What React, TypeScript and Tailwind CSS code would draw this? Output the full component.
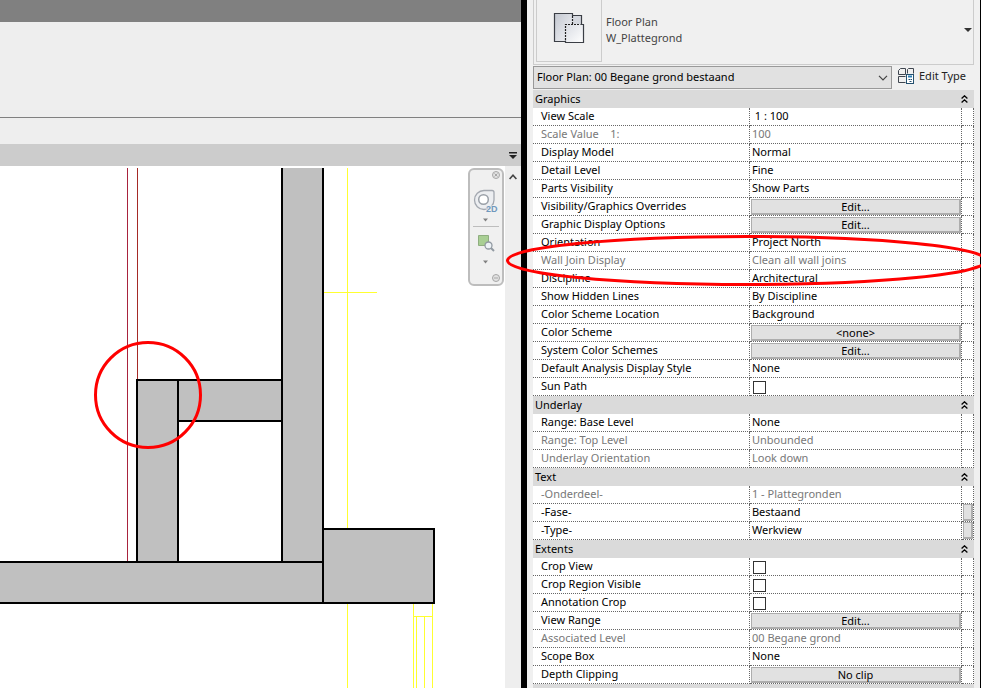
type Row = {
  label: string;
  value?: string;
  kind?: "text" | "button" | "check";
  muted?: boolean;
  extra?: boolean;
};

type Section = { title: string; rows: Row[] };

const SECTIONS: Section[] = [
  {
    title: "Graphics",
    rows: [
      { label: "View Scale", value: " 1 : 100" },
      { label: "Scale Value    1:", value: "100", muted: true },
      { label: "Display Model", value: "Normal" },
      { label: "Detail Level", value: "Fine" },
      { label: "Parts Visibility", value: "Show Parts" },
      { label: "Visibility/Graphics Overrides", value: "Edit...", kind: "button" },
      { label: "Graphic Display Options", value: "Edit...", kind: "button" },
      { label: "Orientation", value: "Project North" },
      { label: "Wall Join Display", value: "Clean all wall joins", muted: true },
      { label: "Discipline", value: "Architectural" },
      { label: "Show Hidden Lines", value: "By Discipline" },
      { label: "Color Scheme Location", value: "Background" },
      { label: "Color Scheme", value: "<none>", kind: "button" },
      { label: "System Color Schemes", value: "Edit...", kind: "button" },
      { label: "Default Analysis Display Style", value: "None" },
      { label: "Sun Path", kind: "check" },
    ],
  },
  {
    title: "Underlay",
    rows: [
      { label: "Range: Base Level", value: "None" },
      { label: "Range: Top Level", value: "Unbounded", muted: true },
      { label: "Underlay Orientation", value: "Look down", muted: true },
    ],
  },
  {
    title: "Text",
    rows: [
      { label: "-Onderdeel-", value: "1 - Plattegronden", muted: true },
      { label: "-Fase-", value: "Bestaand", extra: true },
      { label: "-Type-", value: "Werkview", extra: true },
    ],
  },
  {
    title: "Extents",
    rows: [
      { label: "Crop View", kind: "check" },
      { label: "Crop Region Visible", kind: "check" },
      { label: "Annotation Crop", kind: "check" },
      { label: "View Range", value: "Edit...", kind: "button" },
      { label: "Associated Level", value: "00 Begane grond", muted: true },
      { label: "Scope Box", value: "None" },
      { label: "Depth Clipping", value: "No clip", kind: "button" },
    ],
  },
];

const BEVEL = "border border-r-2 border-b-2 border-[#adadad] bg-[#e1e1e1]";

function FloorPlanIcon() {
  return (
    <svg width="32" height="32" viewBox="0 0 32 32" fill="none">
      <defs>
        <linearGradient id="sheet" x1="0" y1="0" x2="1" y2="1">
          <stop offset="0" stopColor="#c3c7d0" />
          <stop offset="1" stopColor="#f4f5f8" />
        </linearGradient>
        <linearGradient id="front" x1="0" y1="0" x2="1" y2="1">
          <stop offset="0" stopColor="#d9dce3" />
          <stop offset="1" stopColor="#ffffff" />
        </linearGradient>
      </defs>
      <path d="M19.5 2.5h9v9h-9z" fill="#d5d8df" />
      <path d="M1.5.5h18v28h-18z" fill="url(#sheet)" />
      <path d="M12.5 11.5h18v18h-18z" fill="url(#front)" />
      <path d="M12.5 28.500h-11v-28h18v2h9v9" stroke="#3b3e45" strokeWidth="1.200" />
      <path d="M28 11.500h2.500v18h-18v-2" stroke="#3b3e45" strokeWidth="1.200" />
      <path d="M19.5 3v8M12.5 27v-15.500h15" stroke="#222" strokeWidth="1.200" strokeDasharray="2 1" />
    </svg>
  );
}

function EditTypeIcon() {
  return (
    <svg width="17" height="16" viewBox="0 0 17 16" fill="none" stroke="#3f4650">
      <path d="M7.500 14.500h-7v-6h7M.5 6.500v-4l2-2h5v6zM9.500 5.500v-4l1-1h5v5" />
      <rect x="8.500" y="6.500" width="7" height="9" fill="#fff" stroke="#24506f" />
      <path d="M10 8.500h4" stroke="#2d7db3" strokeWidth="2" />
      <path d="M10.500 11.500h1.500M12.500 11.500h1.500M11.500 13.500h2" stroke="#24506f" />
    </svg>
  );
}

function CollapseIcon() {
  return (
    <svg width="7" height="8" viewBox="0 0 7 8" fill="none" stroke="#000" strokeWidth="1.300">
      <path d="M.6 3.500L3.500.8l2.900 2.700M.6 7.500l2.900-2.700l2.900 2.700" />
    </svg>
  );
}

function NavigationBar() {
  return (
    <div className="absolute top-[2px] right-[1px] h-[118px] w-[36px] rounded-md border-2 border-[#bdbdbd] bg-[#f0f0f0]">
      <svg className="h-full w-full" viewBox="0 0 32 114" fill="none" stroke="#a6a6a6">
        <circle cx="26" cy="5" r="3.500" fill="#e2e2e2" />
        <path d="M24.500 3.500l3 3m0-3l-3 3" />
        <path
          d="M14 20.500h8q2 0 2 2v7.500a10 9.500 0 0 1-10 9.500a9.500 9.500 0 0 1 0-19z"
          fill="#eceef1"
          stroke="#a3a8b0"
          strokeWidth="1.300"
        />
        <circle cx="13.500" cy="29.500" r="4.800" fill="#fff" stroke="#9aa0a8" strokeWidth="1.500" />
        <text
          x="16"
          y="42"
          fill="#6f98bd"
          stroke="#f0f0f0"
          strokeWidth="1"
          paintOrder="stroke"
          fontFamily="Liberation Sans, sans-serif"
          fontSize="9"
          fontWeight="700"
        >
          2D
        </text>
        <path d="M13 48.500h5l-2.500 3z" fill="#808080" stroke="none" />
        <path d="M3 56.500h26" stroke="#bdbdbd" />
        <path d="M8.500 65.500h10v10h-10z" fill="#a9cf94" stroke="#8fae80" />
        <circle cx="18.500" cy="75.500" r="3.500" fill="#eef3f7" stroke="#929aa2" strokeWidth="1.300" />
        <path d="M21 78l3 3" stroke="#929aa2" strokeWidth="2" />
        <path d="M13 90.500h5l-2.500 3z" fill="#808080" stroke="none" />
        <circle cx="26" cy="108" r="3.500" fill="#e2e2e2" />
        <path d="M24 108h4" />
      </svg>
    </div>
  );
}

function PlanDrawing() {
  return (
    <svg className="absolute inset-0 h-full w-full" fill="none">
      <g transform="translate(0 -166)">
        <g fill="#ffff30">
          <path d="M347 168h1v520h-1zM324 292h53v1h-53z" />
          <path d="M413 603h1v200h-1zM432 603h1v200h-1zM413 616h20v1h-20zM416 616h1v200h-1zM424 616h1v200h-1z" />
        </g>
        <path d="M127 168h1v393h-1z" fill="#a8233d" />
        <path d="M137 168h1v212h-1z" fill="#a52a26" />
        <path d="M137 380h145V168h41v361h111v74H-2v-41h139z" fill="#c0c0c0" />
        <path d="M178 421h104v141H178z" fill="#fff" />
        <g stroke="#000" strokeWidth="2">
          <path d="M282 168v394M323 168v435M137 562V380h145M178 380v182M178 421h104" />
          <path d="M-2 562h325M-2 603h436v-74H323" />
        </g>
        <circle cx="148" cy="395" r="52.500" stroke="#f00" strokeWidth="3" />
      </g>
    </svg>
  );
}

function Workspace() {
  return (
    <main className="flex min-w-0 flex-1 flex-col bg-[#eeeeee]">
      <div className="h-[22px] shrink-0 bg-[#808080]" />
      <div className="h-24 shrink-0 border-b border-[#808080]" />
      <div className="h-[26px] shrink-0" />
      <div className="flex h-[22px] shrink-0 items-center justify-end bg-[#cccccc] pr-1">
        <button aria-label="View tabs">
          <svg width="8" height="7" viewBox="0 0 8 7" fill="#222">
            <path d="M0 0h8v1.500H0zM0 3h8L4 7z" />
          </svg>
        </button>
      </div>
      <div className="flex min-h-0 flex-1">
        <div className="relative min-w-0 flex-1 bg-white">
          <PlanDrawing />
          <NavigationBar />
        </div>
        <div className="flex w-4 shrink-0 justify-center bg-[#eeeeee] pt-2">
          <button aria-label="Scroll up" className="h-[6px]">
            <svg width="8" height="6" viewBox="0 0 8 6" fill="none" stroke="#444" strokeWidth="1.600">
              <path d="M.6 5L4 1.200L7.400 5" />
            </svg>
          </button>
        </div>
      </div>
    </main>
  );
}

function PropertyValue({ row }: { row: Row }) {
  if (row.kind === "button") {
    return (
      <button aria-label={row.label + " " + row.value} className={"mt-px ml-px block h-4 w-[210px] text-center leading-[13px] " + BEVEL}>
        {row.value}
      </button>
    );
  }
  if (row.kind === "check") {
    return (
      <input
        type="checkbox"
        aria-label={row.label}
        className="mt-[3px] ml-[3px] block size-[13px] appearance-none border border-[#333] bg-white"
      />
    );
  }
  return <span className="block pl-[2px] whitespace-pre">{row.value}</span>;
}

function PropertyRow({ row }: { row: Row }) {
  const cell = "h-[18px] border-r border-b border-dotted border-[#666] p-0 align-top";
  return (
    <tr className={row.muted ? "text-[#787878]" : "text-black"}>
      <th scope="row" className={cell + " pl-2 text-left font-normal whitespace-pre"}>
        {row.label}
      </th>
      <td className={cell}>
        <PropertyValue row={row} />
      </td>
      <td className={cell}>
        {row.extra && <button aria-label={"Associate " + row.label} className={"ml-px block h-[17px] w-[10px] " + BEVEL} />}
      </td>
    </tr>
  );
}

function PropertiesPanel() {
  return (
    <aside className="w-[460px] shrink-0 border-r border-l-6 border-black bg-[#f0f0f0] px-[6px]">
      <div className="flex h-[65px] border border-t-0 border-[#cccccc] pl-[2px]">
        <div className="flex h-[62px] w-[66px] justify-center border border-t-0 border-[#cccccc] pt-[13px]">
          <FloorPlanIcon />
        </div>
        <div className="flex-1 pt-[14px] pl-1 leading-4 text-[#444]">
          <p>Floor Plan</p>
          <p>W_Plattegrond</p>
        </div>
        <button aria-label="Type selector" className="self-start pt-7 pr-px">
          <svg className="block" width="8" height="4" viewBox="0 0 8 4" fill="#333">
            <path d="M0 0h8L4 4z" />
          </svg>
        </button>
      </div>

      <div className="flex h-[25px]">
        <div className="relative mt-px w-[359px]">
          <select
            aria-label="Active view"
            className="block h-[23px] w-full appearance-none border border-[#999] bg-[#e1e1e1] pl-[3px]"
          >
            <option>Floor Plan: 00 Begane grond bestaand</option>
          </select>
          <svg
            className="pointer-events-none absolute top-[9px] right-1"
            width="10"
            height="6"
            viewBox="0 0 10 6"
            fill="none"
            stroke="#444"
            strokeWidth="1.200"
          >
            <path d="M1 .8l4 4l4-4" />
          </svg>
        </div>
        <button className="flex h-[22px] items-center gap-1 pl-[6px] text-[#222]">
          <EditTypeIcon />
          Edit Type
        </button>
      </div>

      <table className="w-full table-fixed border-separate border-spacing-0 bg-white leading-4">
        <colgroup>
          <col />
          <col className="w-[212px]" />
          <col className="w-3" />
        </colgroup>
        {SECTIONS.map((s) => (
          <tbody key={s.title}>
            <tr className="bg-[#dadada]">
              <th colSpan={3} className="h-[18px] p-0 font-normal">
                <button className="flex h-[18px] w-full items-center justify-between pr-[6px] pb-px pl-[2px]">
                  {s.title}
                  <CollapseIcon />
                </button>
              </th>
            </tr>
            {s.rows.map((r) => (
              <PropertyRow key={r.label} row={r} />
            ))}
          </tbody>
        ))}
      </table>
      <div className="h-4 bg-[#dadada]" />
    </aside>
  );
}

export default function App() {
  return (
    <div className="relative flex h-screen overflow-hidden font-['Noto_Sans','Open_Sans',sans-serif] text-[11px] text-black">
      <Workspace />
      <PropertiesPanel />
      {/* markup around the Wall Join Display row */}
      <svg
        className="pointer-events-none absolute top-[234px] right-[-10px]"
        width="486"
        height="54"
        viewBox="0 0 486 54"
        fill="none"
      >
        <ellipse cx="242" cy="26.500" rx="239.500" ry="24" stroke="#f00" strokeWidth="3" />
      </svg>
    </div>
  );
}
